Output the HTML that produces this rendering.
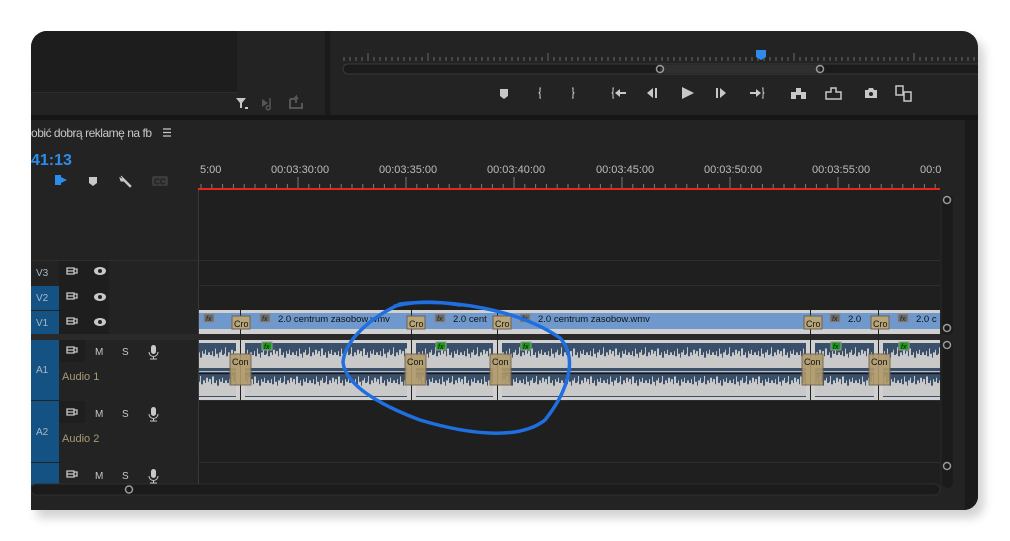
<!DOCTYPE html>
<html><head><meta charset="utf-8">
<style>
body{margin:0;width:1010px;height:541px;background:#fff;overflow:hidden;font-family:"Liberation Sans","DejaVu Sans",sans-serif;}
.frame{position:absolute;left:31px;top:31px;width:947px;height:479px;background:#232323;border-radius:16px 16px 14px 0;overflow:hidden;box-shadow:6px 8px 10px rgba(0,0,0,0.18);}
</style></head><body>
<div class="frame">
<svg width="947" height="479" viewBox="31 31 947 479" style="position:absolute;left:0;top:0" font-family="Liberation Sans, DejaVu Sans, sans-serif">
<defs>
<path id="wp" d="M0 28 V18 h2 V15 h1 V19 h2 V13 h1 V17 h2 V20 h1 V16 h2 V14 h1 V18 h2 V17 h1 V12 h1 V19 h2 V16 h2 V18 h1 V14 h2 V17 h1 V15 h2 V19 h1 V13 h2 V18 h2 V16 h1 V20 h2 V15 h1 V17 h2 V14 h1 V18 h2 V16 h2 V28 Z" fill="#c9c9c9"/>
<pattern id="wvA" x="0" y="340" width="42" height="100" patternUnits="userSpaceOnUse"><use href="#wp" transform="translate(0,-8.4) scale(1,1.3)"/></pattern>
<pattern id="wvB" x="17" y="376" width="42" height="100" patternUnits="userSpaceOnUse"><use href="#wp" transform="translate(0,-16.4) scale(1,1.3)"/></pattern>
</defs>
<rect x="31" y="31" width="206" height="62" fill="#1d1d1d"/>
<rect x="31" y="92" width="206" height="1" fill="#2c2c2c"/>
<rect x="325" y="31" width="5" height="88" fill="#1a1a1a"/>
<rect x="31" y="115" width="947" height="5" fill="#161616"/>
<path d="M236 98 h10 l-4 5 v5 h-2 v-5 z" fill="#c8c8c8"/><rect x="245" y="107" width="3" height="2" fill="#c8c8c8"/>
<path d="M262 99 l6 4 -6 4z" fill="#555"/><path d="M270 98 v9 a2 2 0 1 1 -1 -1" stroke="#555" fill="none" stroke-width="1.5"/>
<path d="M290 99 h5 M290 99 v9 h12 v-5" stroke="#555" stroke-width="2" fill="none"/><path d="M296 103 v-6 l-2 2 m2-2 l2 2" stroke="#555" stroke-width="2" fill="none"/>
<g stroke="#6a6a6a" stroke-width="1">
<path d="M344 57 V61 M350 57V61 M356 57V61 M362 57V61 M368 53V61 M374 57V61 M380 57V61 M386 57V61 M392 57V61 M398 57V61 M404 57V61 M410 57V61 M416 57V61 M422 57V61 M428 53V61 M434 57V61 M440 57V61 M446 57V61 M452 57V61 M458 57V61 M464 57V61 M470 57V61 M476 57V61 M482 57V61 M488 57V61 M494 57V61 M500 57V61 M506 57V61 M512 57V61 M518 57V61 M524 57V61 M530 57V61 M536 57V61 M542 57V61 M548 53V61 M554 57V61 M560 57V61 M566 57V61 M572 57V61 M578 57V61 M584 57V61 M590 57V61 M596 57V61 M602 57V61 M608 57V61 M614 57V61 M620 57V61 M626 57V61 M632 57V61 M638 57V61 M644 57V61 M650 57V61 M656 57V61 M662 57V61 M668 57V61 M674 57V61 M680 57V61 M686 57V61 M692 57V61 M698 57V61 M704 57V61 M710 57V61 M716 57V61 M722 57V61 M728 57V61 M734 57V61 M740 57V61 M746 57V61 M752 57V61 M758 57V61 M764 57V61 M770 57V61 M776 57V61 M782 57V61 M788 57V61 M794 53V61 M800 57V61 M806 57V61 M812 57V61 M818 57V61 M824 57V61 M830 57V61 M836 57V61 M842 57V61 M848 57V61 M854 57V61 M860 57V61 M866 57V61 M872 57V61 M878 57V61 M884 57V61 M890 57V61 M896 57V61 M902 57V61 M908 57V61 M914 53V61 M920 57V61 M926 57V61 M932 57V61 M938 57V61 M944 57V61 M950 57V61 M956 57V61 M962 57V61 M968 57V61 M974 57V61"/>
</g>
<rect x="343" y="64" width="640" height="10" rx="5" fill="#1b1b1b" stroke="#3a3a3a"/>
<rect x="660" y="65" width="160" height="8" fill="#2f2f2f"/>
<circle cx="660" cy="69" r="3.5" fill="none" stroke="#9a9a9a" stroke-width="1.5"/>
<circle cx="820" cy="69" r="3.5" fill="none" stroke="#9a9a9a" stroke-width="1.5"/>
<path d="M756 50 h10 v7 l-5 3 -5 -3z" fill="#2d8ceb"/>
<g fill="#c8c8c8">
<path d="M500 89 h8 v7 l-4 3 -4 -3z"/>
<path d="M541 88 h-1 v4 l-1 1 1 1 v4 h1" stroke="#c8c8c8" fill="none"/>
<path d="M572 88 h1 v4 l1 1 -1 1 v4 h-1" stroke="#c8c8c8" fill="none"/>
<path d="M614 88 h-1 v4 l-1 1 1 1 v4 h1" stroke="#c8c8c8" fill="none"/><path d="M615 93 l5 -4 v3 h6 v2 h-6 v3z"/>
<path d="M647 93 l6 -5 v10z"/><rect x="655" y="88" width="2" height="10"/>
<path d="M682 87 l12 6 -12 6z"/>
<rect x="716" y="88" width="2" height="10"/><path d="M720 88 l6 5 -6 5z"/>
<path d="M750 92 h6 v-3 l5 4 -5 4 v-3 h-6z"/><path d="M762 88 h1 v4 l1 1 -1 1 v4 h-1" stroke="#c8c8c8" fill="none"/>
<path d="M791 92 h5 v-4 h5 v4 h5 v7 h-5 v-4 h-5 v4 h-5z"/>
<path d="M826 92 h5 v-4 h5 v4 h5 v7 h-15z" fill="none" stroke="#c8c8c8" stroke-width="1.5"/>
<path d="M865 90 h3 l1 -2 h4 l1 2 h3 v8 h-12z"/><circle cx="871" cy="94" r="2" fill="#232323"/>
<rect x="896" y="86" width="7" height="9" fill="none" stroke="#c8c8c8" stroke-width="1.5"/><rect x="904" y="92" width="7" height="9" fill="none" stroke="#c8c8c8" stroke-width="1.5"/>
</g>
<rect x="31" y="120" width="947" height="390" fill="#232323"/>
<text x="31" y="137" font-size="12" fill="#c8c8c8" textLength="121">obić dobrą reklamę na fb</text>
<path d="M163 129 h8 M163 132.5 h8 M163 136 h8" stroke="#c8c8c8" stroke-width="1.2"/>
<text x="31" y="165" font-size="16" fill="#2d8ceb" font-weight="bold">41:13</text>
<path d="M55 175 h6 v10 h-6z" fill="#2d8ceb"/><path d="M57 175 l10 5 -10 5z" fill="#2d8ceb"/>
<path d="M89 177 h8 v6 l-4 3 -4 -3z" fill="#c8c8c8"/>
<path d="M121 176 l4 4 l6 6 l-1 1 l-6 -6 l-3 0 l-1 -3 l2 1 l1 -1z" fill="#c8c8c8" stroke="#c8c8c8"/>
<rect x="152" y="176" width="16" height="10" rx="2" fill="#3c3c3c"/><text x="154" y="184.5" font-size="8" font-weight="bold" fill="#1e1e1e">CC</text>
<g font-size="11" fill="#bdbdbd">
<text x="200" y="173">5:00</text><text x="271" y="173">00:03:30:00</text><text x="379" y="173">00:03:35:00</text><text x="487" y="173">00:03:40:00</text><text x="596" y="173">00:03:45:00</text><text x="704" y="173">00:03:50:00</text><text x="812" y="173">00:03:55:00</text><text x="920" y="173">00:0</text>
</g>
<g stroke="#7a7a7a">
<path d="M201 184V189 M211.8 184V189 M222.6 184V189 M233.4 184V189 M244.2 184V189 M255 184V189 M265.8 184V189 M276.6 184V189 M287.4 184V189 M298 177V189 M308.8 184V189 M319.6 184V189 M330.4 184V189 M341.2 184V189 M352 184V189 M362.8 184V189 M373.6 184V189 M384.4 184V189 M395.2 184V189 M406 177V189 M416.8 184V189 M427.6 184V189 M438.4 184V189 M449.2 184V189 M460 184V189 M470.8 184V189 M481.6 184V189 M492.4 184V189 M503.2 184V189 M514 177V189 M524.8 184V189 M535.6 184V189 M546.4 184V189 M557.2 184V189 M568 184V189 M578.8 184V189 M589.6 184V189 M600.4 184V189 M611.2 184V189 M622 177V189 M632.8 184V189 M643.6 184V189 M654.4 184V189 M665.2 184V189 M676 184V189 M686.8 184V189 M697.6 184V189 M708.4 184V189 M719.2 184V189 M730 177V189 M740.8 184V189 M751.6 184V189 M762.4 184V189 M773.2 184V189 M784 184V189 M794.8 184V189 M805.6 184V189 M816.4 184V189 M827.2 184V189 M838 177V189 M848.8 184V189 M859.6 184V189 M870.4 184V189 M881.2 184V189 M892 184V189 M902.8 184V189 M913.6 184V189 M924.4 184V189 M935.2 184V189"/>
</g>
<rect x="198" y="188" width="742" height="2.5" fill="#e8261c"/>
<rect x="198" y="190" width="1" height="295" fill="#3a3a3a"/>
<rect x="199" y="190" width="741" height="295" fill="#1f1f1f"/>
<g stroke="#2e2e2e"><path d="M31 260.5H940 M31 285.5H940 M31 310.5H940 M31 400.5H940 M31 462.5H940"/></g>
<rect x="31" y="334" width="909" height="6" fill="#2a2a2a"/>
<rect x="31" y="261" width="167" height="224" fill="#232323"/>
<rect x="59" y="261" width="50" height="73" fill="#1e1e1e"/>
<rect x="59" y="340" width="26" height="22" fill="#1e1e1e"/><rect x="59" y="401" width="26" height="22" fill="#1e1e1e"/>
<rect x="31" y="286" width="28" height="48" fill="#145283"/>
<rect x="31" y="340" width="28" height="145" fill="#145283"/>
<g stroke="#232323"><path d="M31 310.5H59 M31 400.5H59 M31 462.5H59"/></g>
<rect x="31" y="334" width="167" height="6" fill="#2a2a2a"/>
<g font-size="10" fill="#a8b8c8"><text x="36" y="276">V3</text><text x="36" y="301">V2</text><text x="36" y="326">V1</text><text x="36" y="373">A1</text><text x="36" y="435">A2</text></g>
<g fill="none" stroke="#c8c8c8" stroke-width="1.3">
<path d="M67 268h7v3h-7z M67 271h7v3h-7z M74 269h3v4h-3"/>
<path d="M67 293h7v3h-7z M67 296h7v3h-7z M74 294h3v4h-3"/>
<path d="M67 318h7v3h-7z M67 321h7v3h-7z M74 319h3v4h-3"/>
<path d="M67 347h7v3h-7z M67 350h7v3h-7z M74 348h3v4h-3"/>
<path d="M67 409h7v3h-7z M67 412h7v3h-7z M74 410h3v4h-3"/>
<path d="M67 471h7v3h-7z M67 474h7v3h-7z M74 472h3v4h-3"/>
</g>
<g fill="#c8c8c8"><ellipse cx="100" cy="271" rx="6" ry="4"/><ellipse cx="100" cy="297" rx="6" ry="4"/><ellipse cx="100" cy="322" rx="6" ry="4"/></g>
<g fill="#232323"><circle cx="100" cy="271" r="2"/><circle cx="100" cy="297" r="2"/><circle cx="100" cy="322" r="2"/></g>
<g font-size="10" fill="#c8c8c8"><text x="95" y="355">M</text><text x="122" y="355">S</text><text x="95" y="417">M</text><text x="122" y="417">S</text><text x="95" y="479">M</text><text x="122" y="479">S</text></g>
<g fill="#c8c8c8"><rect x="151" y="345" width="5" height="9" rx="2.5"/><rect x="151" y="407" width="5" height="9" rx="2.5"/><rect x="151" y="469" width="5" height="9" rx="2.5"/></g>
<g stroke="#c8c8c8" fill="none"><path d="M149 352a4 4 0 0 0 9 0M153.5 356v3M150 359h7"/><path d="M149 414a4 4 0 0 0 9 0M153.5 418v3M150 421h7"/><path d="M149 476a4 4 0 0 0 9 0M153.5 480v3M150 483h7"/></g>
<g font-size="11" fill="#a89a78"><text x="62" y="380">Audio 1</text><text x="62" y="442">Audio 2</text></g>
<rect x="199" y="310" width="741" height="24" fill="#d0d0d0"/>
<rect x="199" y="313" width="741" height="16" fill="#6f98cc"/>
<rect x="199" y="340" width="741" height="60" fill="#d0d0d0"/>
<rect x="199" y="343" width="741" height="54" fill="#3a4f6a"/>
<rect x="199" y="343" width="741" height="25" fill="url(#wvA)"/>
<rect x="199" y="376" width="741" height="20" fill="url(#wvB)"/>
<rect x="199" y="373" width="741" height="1.2" fill="#1a1a1a"/><rect x="199" y="371" width="741" height="1" fill="#bbb"/>
<g stroke="#222" stroke-width="1"><path d="M240.5 310V400 M411.5 310V400 M497.5 310V400 M810.5 310V400 M878.5 310V400"/></g>
<g fill="#d0d0d0"><rect x="241" y="340" width="4" height="60"/><rect x="412" y="340" width="4" height="60"/><rect x="498" y="340" width="4" height="60"/><rect x="811" y="340" width="4" height="60"/><rect x="879" y="340" width="4" height="60"/>
<rect x="236" y="340" width="4" height="60"/><rect x="407" y="340" width="4" height="60"/><rect x="493" y="340" width="4" height="60"/><rect x="806" y="340" width="4" height="60"/><rect x="874" y="340" width="4" height="60"/></g>
<g fill="#6b6b6b" stroke="#8a8a8a"><rect x="204" y="314" width="10" height="8"/><rect x="260" y="314" width="10" height="8"/><rect x="435" y="314" width="10" height="8"/><rect x="520" y="314" width="10" height="8"/><rect x="830" y="314" width="10" height="8"/><rect x="898" y="314" width="10" height="8"/></g>
<g font-size="7" font-style="italic" fill="#222"><text x="206" y="321">fx</text><text x="262" y="321">fx</text><text x="437" y="321">fx</text><text x="522" y="321">fx</text><text x="832" y="321">fx</text><text x="900" y="321">fx</text></g>
<g font-size="9.5" fill="#111"><text x="278" y="322">2.0 centrum zasobow.wmv</text><text x="453" y="322">2.0 cent</text><text x="538" y="322">2.0 centrum zasobow.wmv</text><text x="848" y="322">2.0</text><text x="916" y="322">2.0 c</text></g>
<g fill="#b8a57a" stroke="#6e6050"><rect x="232" y="316" width="18" height="13"/><rect x="407" y="316" width="18" height="13"/><rect x="493" y="316" width="18" height="13"/><rect x="804" y="316" width="18" height="13"/><rect x="871" y="316" width="18" height="13"/></g>
<g font-size="9" fill="#111"><text x="234" y="327">Cro</text><text x="409" y="327">Cro</text><text x="495" y="327">Cro</text><text x="806" y="327">Cro</text><text x="873" y="327">Cro</text></g>
<g fill="#1c9a1c" stroke="#9a9a9a"><rect x="262" y="342" width="10" height="8"/><rect x="436" y="342" width="10" height="8"/><rect x="521" y="342" width="10" height="8"/><rect x="831" y="342" width="10" height="8"/><rect x="899" y="342" width="10" height="8"/></g>
<g font-size="7" font-style="italic" fill="#111"><text x="264" y="349">fx</text><text x="438" y="349">fx</text><text x="523" y="349">fx</text><text x="833" y="349">fx</text><text x="901" y="349">fx</text></g>
<g fill="#b09a6a" stroke="#6e6050" opacity="0.9"><rect x="230" y="354" width="21" height="31"/><rect x="405" y="354" width="21" height="31"/><rect x="490" y="354" width="21" height="31"/><rect x="802" y="354" width="21" height="31"/><rect x="869" y="354" width="21" height="31"/></g>
<g font-size="9" fill="#111"><text x="232" y="365">Con</text><text x="407" y="365">Con</text><text x="492" y="365">Con</text><text x="804" y="365">Con</text><text x="871" y="365">Con</text></g>
<rect x="940" y="190" width="25" height="320" fill="#232323"/>
<rect x="942" y="195" width="11" height="140" rx="5" fill="#1b1b1b"/>
<rect x="942" y="340" width="11" height="148" rx="5" fill="#1b1b1b"/>
<g fill="none" stroke="#9a9a9a" stroke-width="1.5"><circle cx="947" cy="200" r="3.5"/><circle cx="947" cy="328" r="3.5"/><circle cx="947" cy="345" r="3.5"/><circle cx="947" cy="466" r="3.5"/></g>
<rect x="965" y="120" width="13" height="390" fill="#1a1a1a"/>
<rect x="31" y="484" width="909" height="11" rx="5" fill="#1b1b1b" stroke="#2e2e2e"/>
<circle cx="129" cy="489.5" r="3.5" fill="none" stroke="#9a9a9a" stroke-width="1.5"/>
<rect x="31" y="496" width="934" height="14" fill="#232323"/>
<path d="M400 304 C450 298 520 310 560 338 C580 360 565 395 545 420 C520 440 470 435 420 420 C380 405 345 385 343 362 C345 340 370 318 400 304 Z M395 306 C420 300 440 302 460 305" fill="none" stroke="#1f6fe0" stroke-width="3.5" stroke-linecap="round"/>
</svg>
</div>
</body></html>
